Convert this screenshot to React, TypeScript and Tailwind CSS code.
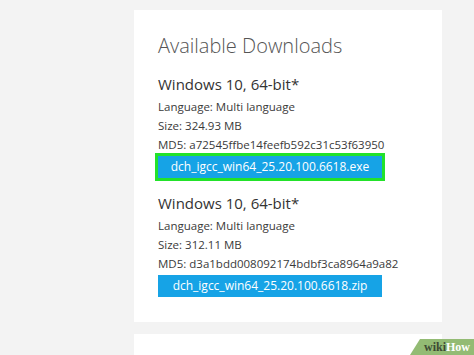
import React from 'react';

interface DownloadProps {
  title: string;
  size: string;
  md5: string;
  file: string;
  highlighted?: boolean;
}

const Download: React.FC<DownloadProps> = ({ title, size, md5, file, highlighted }) => (
  <div className="flex flex-col">
    <h3 className="text-[15px] leading-[20px] text-[#333]">{title}</h3>
    <div className="mt-[3px] text-[11.5px] leading-[19px] text-[#3a3a3a]">
      <p>Language: Multi language</p>
      <p>Size: {size}</p>
      <p>MD5: {md5}</p>
    </div>
    <div className="mt-[2px]">
      <a
        className={`flex h-[22px] w-[224px] items-center justify-center bg-[#16a3e6] text-[12px] text-white ${
          highlighted ? 'outline-[3px] outline-solid outline-[#22e22a]' : ''
        }`}
      >
        {file}
      </a>
    </div>
  </div>
);

export default function App() {
  return (
    <div
      className="relative h-[355px] w-[474px] overflow-hidden bg-[#f3f3f3] pl-[134px] pt-[10px]"
      style={{ fontFamily: '"Open Sans", "Noto Sans", sans-serif' }}
    >
      <div className="w-[308px] bg-white pb-[25px] pl-[24px] pt-[22px]">
        <h2 className="text-[20px] leading-[28px] font-light text-[#555]">Available Downloads</h2>
        <div className="mt-[14px] flex flex-col gap-[15px]">
          <Download
            title="Windows 10, 64-bit*"
            size="324.93 MB"
            md5="a72545ffbe14feefb592c31c53f63950"
            file="dch_igcc_win64_25.20.100.6618.exe"
            highlighted
          />
          <Download
            title="Windows 10, 64-bit*"
            size="312.11 MB"
            md5="d3a1bdd008092174bdbf3ca8964a9a82"
            file="dch_igcc_win64_25.20.100.6618.zip"
          />
        </div>
      </div>
      <div className="mt-[12px] h-[40px] w-[308px] bg-white" />

      {/* wikiHow badge */}
      <div className="absolute bottom-0 right-0 flex h-[16px] w-[64px] items-center justify-end bg-[#93bb74] pr-[4px] [clip-path:polygon(10px_0,100%_0,100%_100%,0_100%)]">
        <span
          className="text-[12px] leading-none font-bold"
          style={{ fontFamily: '"Liberation Serif", serif' }}
        >
          <span className="text-[#3d4a33]">wiki</span>
          <span className="text-white">How</span>
        </span>
      </div>
    </div>
  );
}
